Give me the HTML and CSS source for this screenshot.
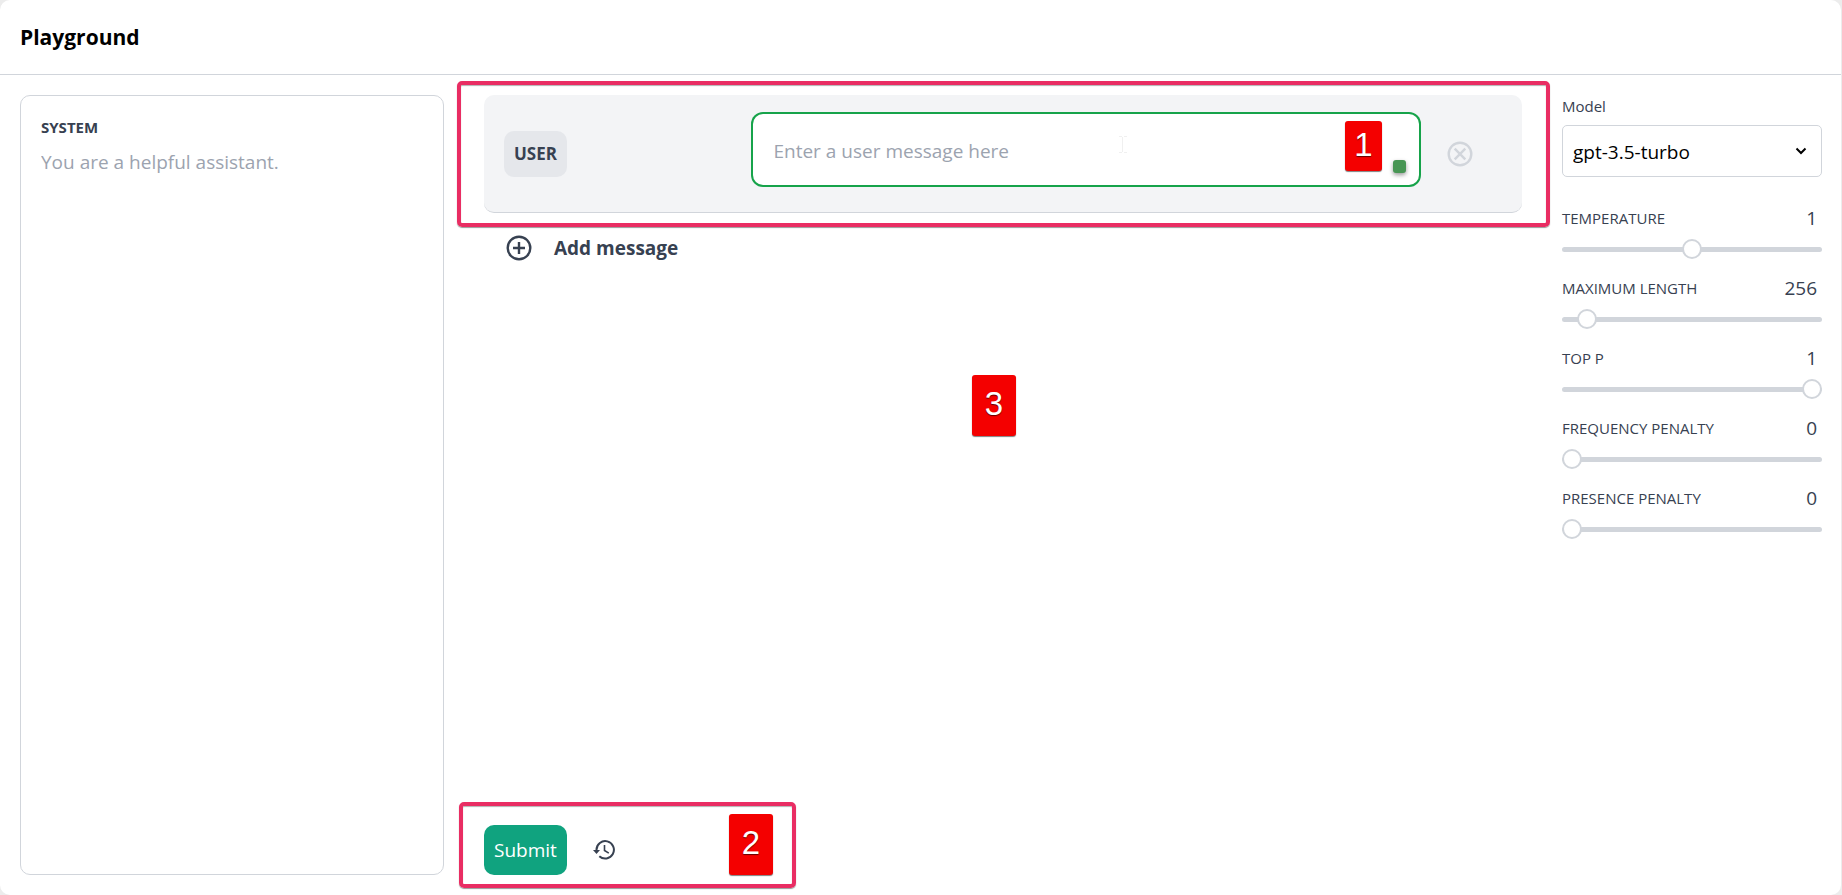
FILE: index.html
```html
<!DOCTYPE html>
<html lang="en">
<head>
    <meta charset="UTF-8">
    <meta name="viewport" content="width=device-width, initial-scale=1.0">
    <title>Playground</title>
    <link rel="stylesheet" href="styles.css">
</head>
<body>
    <div class="page">
        <header class="header">
            <h1>Playground</h1>
        </header>

        <main class="content">
            <section class="system">
                <label for="system-text">SYSTEM</label>
                <textarea id="system-text" placeholder="You are a helpful assistant."></textarea>
            </section>

            <section class="chat">
                <div class="message-wrap">
                    <div class="message">
                        <div>
                            <button class="role" type="button">USER</button>
                        </div>
                        <div class="message-input">
                            <textarea id="user-text" aria-label="User message" placeholder="Enter a user message here"></textarea>
                            <svg class="caret" width="8" height="17" viewBox="0 0 8 17" fill="none" stroke="#f0f0f0"><path d="M0 .5h3M5 .5h3M0 16.5h3M5 16.5h3M3.5 1v15"/></svg>
                            <span class="marker marker-1">1</span>
                            <span class="grip"></span>
                        </div>
                        <button class="remove" type="button" aria-label="Remove message">
                            <svg width="26" height="26" viewBox="0 0 26 26" fill="none" stroke="currentColor" stroke-width="2.4"><circle cx="13" cy="13" r="11.3"/><path d="M7.700 7.700l10.600 10.600M18.300 7.700L7.700 18.300"/></svg>
                        </button>
                    </div>
                    <div class="frame frame-message"></div>
                </div>

                <button class="add-message" type="button">
                    <svg width="26" height="26" viewBox="0 0 26 26" fill="none" stroke="currentColor" stroke-width="2.4"><circle cx="13" cy="13" r="11.3"/><path d="M13 7v12M7 13h12"/></svg>
                    Add message
                </button>

                <span class="marker marker-3">3</span>

                <div class="actions">
                    <button class="submit" type="button">Submit</button>
                    <button class="history" type="button" aria-label="History">
                        <svg width="22" height="20" viewBox="0 0 22 20" fill="none" stroke="currentColor" stroke-width="2"><path d="M3.500 11V9.800A8.700 8.700 0 1 1 6.300 16.200"/><path d="M0 10h7l-3.500 4z" fill="currentColor" stroke="none"/><path d="M11.500 5v5.500l4.300 2.600" stroke-width="1.600"/></svg>
                    </button>
                    <div class="frame frame-actions">
                        <span class="marker marker-2">2</span>
                    </div>
                </div>
            </section>

            <aside class="settings">
                <div class="model">
                    <label for="model">Model</label>
                    <div class="select-wrap">
                        <select id="model">
                            <option>gpt-3.5-turbo</option>
                        </select>
                        <svg class="chevron" width="12" height="8" viewBox="0 0 12 8" fill="none" stroke="#000" stroke-width="2"><path d="M1.500 1.500L6 6l4.500-4.500"/></svg>
                    </div>
                </div>

                <div class="slider">
                    <label for="temperature">TEMPERATURE</label>
                    <output for="temperature">1</output>
                    <input id="temperature" type="range" min="0" max="2" step="0.01" value="1">
                </div>
                <div class="slider">
                    <label for="max-length">MAXIMUM LENGTH</label>
                    <output for="max-length">256</output>
                    <input id="max-length" type="range" min="1" max="4000" value="256">
                </div>
                <div class="slider">
                    <label for="top-p">TOP P</label>
                    <output for="top-p">1</output>
                    <input id="top-p" type="range" min="0" max="1" step="0.01" value="1">
                </div>
                <div class="slider">
                    <label for="frequency">FREQUENCY PENALTY</label>
                    <output for="frequency">0</output>
                    <input id="frequency" type="range" min="0" max="2" step="0.01" value="0">
                </div>
                <div class="slider">
                    <label for="presence">PRESENCE PENALTY</label>
                    <output for="presence">0</output>
                    <input id="presence" type="range" min="0" max="2" step="0.01" value="0">
                </div>
            </aside>
        </main>
    </div>
</body>
</html>
```
FILE: styles.css
```css
* {
    box-sizing: border-box;
}
body {
    margin: 0;
    background-color: #ececec;
    font-family: "Open Sans", "Noto Sans", sans-serif;
    font-size: 19px;
    line-height: 30px;
    color: #374151;
}
button, textarea, select {
    font: inherit;
    color: inherit;
    margin: 0;
    padding: 0;
    border: none;
    background: none;
}
button {
    cursor: pointer;
}
svg {
    display: block;
}
.page {
    display: flex;
    flex-direction: column;
    min-height: 100vh;
    margin-right: 1px;
    background-color: #fff;
    border-radius: 10px;
}
.header {
    padding: 22px 20px;
    border-bottom: 1px solid #d1d5db;
}
h1 {
    margin: 0;
    font-size: 21px;
    font-weight: 700;
    line-height: 30px;
    color: #000;
}
.content {
    flex: 1;
    display: grid;
    grid-template-columns: 29fr 71fr 260px;
    gap: 40px;
    padding: 20px;
    padding-right: 19px;
}

/* system prompt */
.system {
    display: flex;
    flex-direction: column;
    padding: 20px;
    border: 1px solid #d1d5db;
    border-radius: 10px;
}
.system label {
    font-size: 15px;
    font-weight: 700;
    line-height: 22px;
}
.system textarea {
    flex: 1;
    margin-top: 9px;
    resize: none;
    outline: none;
}
textarea::placeholder {
    color: #9ca3af;
}

/* messages */
.chat {
    position: relative;
    display: flex;
    flex-direction: column;
    align-items: flex-start;
}
.message-wrap {
    position: relative;
    width: 100%;
}
.message {
    display: grid;
    grid-template-columns: 3fr 8fr 1fr;
    align-items: center;
    padding: 19px 20px 27px;
    background-color: #f3f4f6;
    border-bottom: 1px solid #d1d5db;
    border-radius: 10px;
}
.role {
    display: block;
    margin-top: 8px;
    padding: 8px 10px;
    background-color: #e5e7eb;
    border-radius: 10px;
    font-size: 17px;
    font-weight: 700;
}
.message-input {
    position: relative;
}
.message-input textarea {
    display: block;
    width: 100%;
    height: 71px;
    padding: 22px 20px 18px;
    border-radius: 10px;
    background-color: #fff;
    outline: none;
    box-shadow: 0 0 0 2px #16a34a;
    resize: none;
    overflow: hidden;
}
.caret {
    position: absolute;
    left: 55%;
    top: 22px;
}
.grip {
    position: absolute;
    right: 13px;
    bottom: 12px;
    width: 13px;
    height: 13px;
    border-radius: 3px;
    background-color: #489654;
    box-shadow: 0 2px 4px rgba(0, 0, 0, 0.4);
}
.remove {
    justify-self: center;
    margin-top: 8px;
    color: #d1d5db;
}
.add-message {
    display: flex;
    align-items: center;
    gap: 22px;
    margin-top: 20px;
    margin-left: 22px;
    font-weight: 700;
}
.actions {
    position: relative;
    display: flex;
    align-items: center;
    gap: 26px;
    margin-top: auto;
}
.submit {
    padding: 10px;
    background-color: #10a37f;
    border-radius: 10px;
    color: #fff;
}

/* callouts */
.frame {
    position: absolute;
    border: 4px solid #e92d63;
    border-radius: 5px;
    box-shadow: 0 1px 1px rgba(0, 0, 0, 0.4), inset 0 1px 1px rgba(0, 0, 0, 0.3);
    pointer-events: none;
}
.frame-message {
    inset: -14px -28px -14px -27px;
}
.frame-actions {
    left: -25px;
    top: -23px;
    bottom: -13px;
    width: 337px;
}
.marker {
    position: absolute;
    width: 44px;
    height: 61px;
    border-radius: 3px;
    background-color: #f40000;
    box-shadow: 0 1px 1px rgba(0, 0, 0, 0.5);
    color: #fff;
    font-family: "Liberation Sans", Arial, sans-serif;
    font-size: 33px;
    line-height: 58px;
    text-align: center;
    text-shadow: 0 1px 1px rgba(0, 0, 0, 0.6);
}
.marker-1 {
    right: 37px;
    top: 7px;
    width: 37px;
    height: 50px;
    line-height: 48px;
}
.marker-2 {
    right: 19px;
    top: 8px;
}
.marker-3 {
    left: 47%;
    top: 280px;
}

/* settings */
.model {
    display: flex;
    flex-direction: column;
    gap: 8px;
    margin-bottom: 26px;
}
.model label, .slider label {
    font-size: 15px;
    line-height: 22px;
}
.select-wrap {
    position: relative;
}
select {
    appearance: none;
    display: block;
    width: 100%;
    height: 52px;
    padding: 1px 10px 0;
    border: 1px solid #d1d5db;
    border-radius: 5px;
    color: #000;
}
.chevron {
    position: absolute;
    right: 15px;
    top: 22px;
    pointer-events: none;
}
.slider {
    display: grid;
    grid-template-columns: 1fr auto;
    align-items: center;
    margin-bottom: 14px;
}
.slider output {
    padding-right: 5px;
}
.slider input {
    grid-column: span 2;
    appearance: none;
    width: 100%;
    height: 20px;
    margin: 6px 0 0;
    background: none;
}
.slider input::-webkit-slider-runnable-track {
    height: 5px;
    border-radius: 3px;
    background-color: #d1d5db;
}
.slider input::-webkit-slider-thumb {
    appearance: none;
    width: 20px;
    height: 20px;
    margin-top: -8px;
    border: 2px solid #d1d5db;
    border-radius: 50%;
    background-color: #fff;
}
```
